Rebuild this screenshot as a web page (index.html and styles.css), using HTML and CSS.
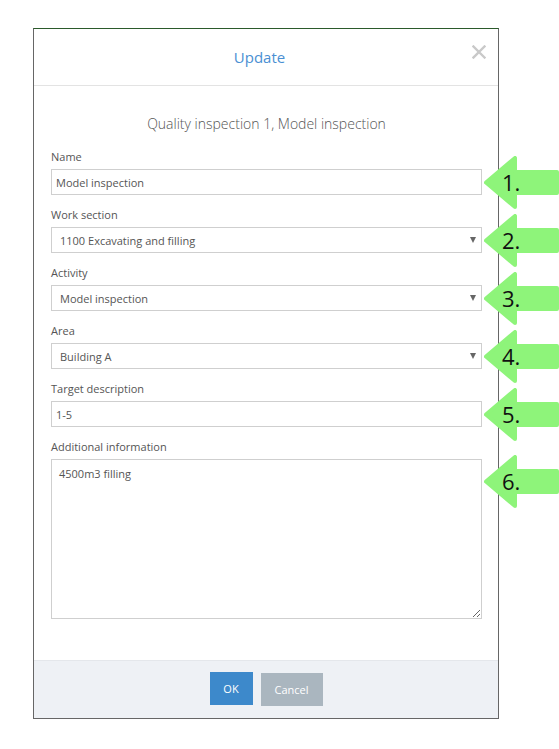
FILE: index.html
```html
<!DOCTYPE html>
<html lang="en">
<head>
<meta charset="utf-8">
<title>Update</title>
<link rel="stylesheet" href="styles.css">
</head>
<body>
<svg class="defs" width="0" height="0" aria-hidden="true">
  <symbol id="callout-shape" viewBox="0 0 75 53">
    <polygon points="2,26.5 31,2 31,16 73,16 73,37 31,37 31,51" fill="#8ef47a" stroke="#8ef47a" stroke-width="4" stroke-linejoin="round"/>
  </symbol>
</svg>

<div class="dialog">
  <div class="dialog-header">
    <h1 class="dialog-title">Update</h1>
    <button class="dialog-close" type="button" aria-label="Close">
      <svg width="14" height="14" viewBox="0 0 14 14"><path d="M1.5 1.5 L12.5 12.5 M12.5 1.5 L1.5 12.5" stroke="#c9c9c9" stroke-width="2.4" stroke-linecap="square"/></svg>
    </button>
  </div>

  <form class="dialog-body">
    <p class="subtitle">Quality inspection 1, Model inspection</p>

    <div class="field">
      <label class="field-label" for="f-name">Name</label>
      <div class="ctl">
        <input class="input" id="f-name" type="text" value="Model inspection">
        <span class="callout"><svg><use href="#callout-shape"/></svg><span class="callout-num">1.</span></span>
      </div>
    </div>

    <div class="field">
      <label class="field-label" for="f-section">Work section</label>
      <div class="ctl select-wrap">
        <select class="select" id="f-section"><option>1100 Excavating and filling</option></select>
        <span class="callout"><svg><use href="#callout-shape"/></svg><span class="callout-num">2.</span></span>
      </div>
    </div>

    <div class="field">
      <label class="field-label" for="f-activity">Activity</label>
      <div class="ctl select-wrap">
        <select class="select" id="f-activity"><option>Model inspection</option></select>
        <span class="callout"><svg><use href="#callout-shape"/></svg><span class="callout-num">3.</span></span>
      </div>
    </div>

    <div class="field">
      <label class="field-label" for="f-area">Area</label>
      <div class="ctl select-wrap">
        <select class="select" id="f-area"><option>Building A</option></select>
        <span class="callout"><svg><use href="#callout-shape"/></svg><span class="callout-num">4.</span></span>
      </div>
    </div>

    <div class="field">
      <label class="field-label" for="f-target">Target description</label>
      <div class="ctl">
        <input class="input" id="f-target" type="text" value="1-5">
        <span class="callout"><svg><use href="#callout-shape"/></svg><span class="callout-num">5.</span></span>
      </div>
    </div>

    <div class="field field-last">
      <label class="field-label" for="f-info">Additional information</label>
      <div class="ctl">
        <textarea class="textarea" id="f-info">4500m3 filling</textarea>
        <span class="callout callout-top"><svg><use href="#callout-shape"/></svg><span class="callout-num">6.</span></span>
      </div>
    </div>
  </form>

  <div class="dialog-footer">
    <button class="btn btn-primary" type="button">OK</button>
    <button class="btn btn-muted" type="button">Cancel</button>
  </div>
</div>
</body>
</html>
```
FILE: styles.css
```css
html, body {
  margin: 0;
  padding: 0;
  background: #fff;
}

body {
  font-family: "Open Sans", "Noto Sans", sans-serif;
  color: #555;
  overflow-x: hidden;
  padding: 28px 0 0 33px;
}

.defs {
  position: absolute;
  width: 0;
  height: 0;
}

/* dialog frame */
.dialog {
  width: 466px;
  box-sizing: border-box;
  border: 1px solid #666;
  border-top-color: #2b5a2b;
  background: #fff;
}

.dialog-header {
  display: flex;
  align-items: center;
  height: 56px;
  padding: 0 12px 0 13px;
  border-bottom: 1px solid #e3e3e3;
}

.dialog-title {
  flex: 1;
  margin: 0;
  text-align: center;
  font-size: 15px;
  font-weight: 400;
  color: #4a8fd3;
  line-height: 22px;
}

.dialog-close {
  align-self: flex-start;
  margin-top: 16px;
  width: 14px;
  height: 14px;
  padding: 0;
  border: 0;
  background: none;
  display: flex;
}

/* body / form */
.dialog-body {
  margin: 0;
  padding: 28px 16px 41px 17px;
}

.subtitle {
  margin: 0 0 14px;
  text-align: center;
  font-size: 14px;
  font-weight: 300;
  line-height: 20px;
  color: #555;
}

.field {
  margin-bottom: 11px;
}

.field-last {
  margin-bottom: 0;
}

.field-label {
  display: block;
  font-size: 11px;
  line-height: 17px;
  margin-bottom: 4px;
  color: #555;
}

.ctl {
  position: relative;
}

.input,
.select,
.textarea {
  display: block;
  box-sizing: border-box;
  width: 100%;
  margin: 0;
  border: 1px solid #cfcfcf;
  border-radius: 0;
  background: #fff;
  font-family: inherit;
  font-size: 11px;
  color: #555;
  outline: none;
}

.input {
  height: 26px;
  padding: 0 4px;
}

.select {
  height: 26px;
  padding: 0 20px 0 8px;
  appearance: none;
  -webkit-appearance: none;
}

.select-wrap::after {
  content: "";
  position: absolute;
  right: 6px;
  top: 10px;
  border-left: 3.5px solid transparent;
  border-right: 3.5px solid transparent;
  border-top: 6px solid #666;
  pointer-events: none;
}

.textarea {
  height: 160px;
  padding: 5px 7px;
  line-height: 17px;
  resize: both;
}

/* numbered green pointers to the right of each field */
.callout {
  position: absolute;
  left: calc(100% + 2px);
  top: 50%;
  width: 75px;
  height: 53px;
  margin-top: -26.5px;
  display: block;
}

.callout-top {
  top: 22px;
}

.callout svg {
  display: block;
  width: 75px;
  height: 53px;
}

.callout-num {
  position: absolute;
  left: 18px;
  top: 0;
  line-height: 53px;
  font-size: 22px;
  color: #111;
}

/* footer */
.dialog-footer {
  display: flex;
  justify-content: center;
  gap: 8px;
  padding: 11px 0 12px;
  background: #eef1f5;
  border-top: 1px solid #e4e7eb;
}

.btn {
  height: 33px;
  border: 0;
  border-radius: 0;
  font-family: inherit;
  font-size: 11px;
  color: #fff;
  padding: 0;
}

.btn-primary {
  width: 43px;
  background: #3d89cb;
}

.btn-muted {
  width: 62px;
  margin-top: 1px;
  background: #aab6bf;
}
```
